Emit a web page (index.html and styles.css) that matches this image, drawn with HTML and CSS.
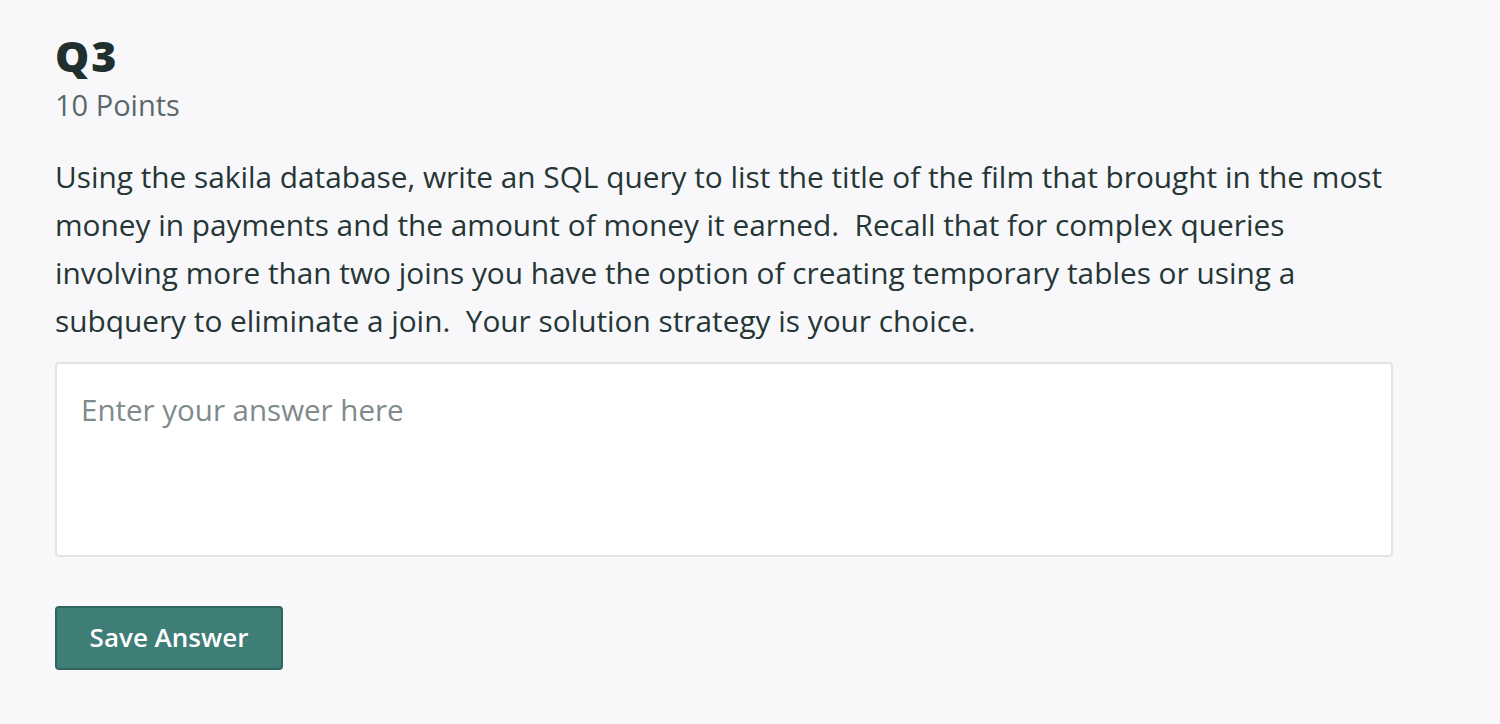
FILE: index.html
```html
<!DOCTYPE html>
<html lang="en">
<head>
<meta charset="utf-8">
<title>Q3</title>
<link rel="stylesheet" href="styles.css">
</head>
<body>
<main class="question">
  <header class="question-head">
    <h2 class="question-title">Q3</h2>
    <div class="question-points">10 Points</div>
  </header>
  <p class="question-text">Using the sakila database, write an SQL query to list the title of the film that brought in the most<br>money in payments and the amount of money it earned.&nbsp; Recall that for complex queries<br>involving more than two joins you have the option of creating temporary tables or using a<br>subquery to eliminate a join.&nbsp; Your solution strategy is your choice.</p>
  <textarea class="answer" placeholder="Enter your answer here"></textarea>
  <div class="actions">
    <button class="save-btn" type="button">Save Answer</button>
  </div>
</main>
</body>
</html>
```
FILE: styles.css
```css
html, body {
  margin: 0;
  padding: 0;
  background: #f8f8fa;
}
body {
  font-family: "Open Sans", "Liberation Sans", sans-serif;
  color: #253635;
}
.question {
  padding: 31px 55px 40px 55px;
  width: 1338px;
}
.question-head {
  display: flex;
  flex-direction: column;
}
.question-title {
  margin: 0;
  font-size: 43px;
  line-height: 50px;
  font-weight: 800;
  letter-spacing: 2px;
  color: #1f302f;
}
.question-points {
  font-size: 29px;
  line-height: 48px;
  color: #5b6869;
}
.question-text {
  margin: 24px 0 0 0;
  font-size: 29.8px;
  line-height: 48px;
  white-space: nowrap;
}
.answer {
  display: block;
  box-sizing: border-box;
  margin-top: 17px;
  width: 1338px;
  height: 195px;
  padding: 28px 24px;
  border: 2px solid #e2e5e8;
  border-radius: 4px;
  background: #ffffff;
  font-family: inherit;
  font-size: 29.5px;
  line-height: 36px;
  color: #253635;
  resize: none;
  outline: none;
}
.answer::placeholder {
  color: #7e8a8b;
}
.actions {
  margin-top: 49px;
}
.save-btn {
  box-sizing: border-box;
  width: 228px;
  height: 64px;
  background: #3f7d77;
  border: 2px solid #2f6660;
  border-radius: 4px;
  color: #ffffff;
  font-family: inherit;
  font-size: 26px;
  font-weight: 600;
  padding: 0 0 3px 0;
}
```
